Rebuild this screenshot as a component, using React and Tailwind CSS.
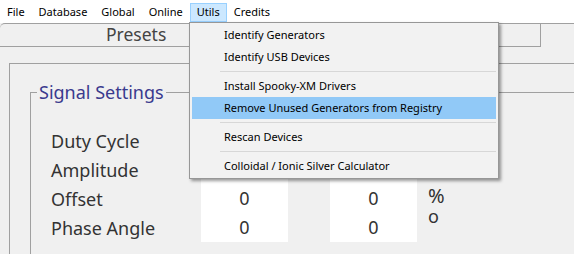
import React from 'react';

const menus = ['File', 'Database', 'Global', 'Online', 'Utils', 'Credits'];

const utilsItems = [
  { label: 'Identify Generators' },
  { label: 'Identify USB Devices' },
  { sep: true },
  { label: 'Install Spooky-XM Drivers' },
  { label: 'Remove Unused Generators from Registry', active: true },
  { sep: true },
  { label: 'Rescan Devices' },
  { sep: true },
  { label: 'Colloidal / Ionic Silver Calculator' },
];

const rows = [
  { label: 'Duty Cycle', a: '', b: '' },
  { label: 'Amplitude', a: '', b: '' },
  { label: 'Offset', a: '0', b: '0', units: true },
  { label: 'Phase Angle', a: '0', b: '0' },
];

export default function App() {
  return (
    <div className="relative w-[574px] h-[254px] overflow-hidden bg-[#f0f0f0] font-['Noto_Sans',sans-serif] text-[#333]">
      {/* menu bar */}
      <div className="flex h-[23px] bg-white text-[11px] text-black">
        {menus.map((m) => (
          <div
            key={m}
            className={
              'mt-[3px] h-[19px] px-[6px] flex items-center border ' +
              (m === 'Utils' ? 'bg-[#cce8ff] border-[#99d1ff]' : 'border-transparent')
            }
          >
            {m}
          </div>
        ))}
      </div>

      {/* tab strip */}
      <div className="flex h-[24px]">
        <div className="w-[541px] border-t border-b border-r border-[#a0a0a0] rounded-tl-[5px] flex items-center pl-[106px] text-[17.5px] text-[#444] leading-none">
          Presets
        </div>
        <div className="flex-1 border-t border-[#a0a0a0]"></div>
      </div>

      {/* page */}
      <div className="pt-[16px] pl-[9px]">
        <div className="border-t border-l border-[#a0a0a0] h-[200px] pl-[20px] pt-[16px]">
          <fieldset className="border-t border-l border-[#a0a0a0] h-[200px]">
            <legend className="ml-[6px] px-[2px] text-[18px] leading-[25px] text-[#3a3a8e]">Signal Settings</legend>
            <div className="pt-[21px] pl-[20px] flex flex-col">
              {rows.map((r) => (
                <div key={r.label} className="flex h-[29px] items-center">
                  <div className="w-[150px] text-[18px] leading-none">{r.label}</div>
                  <div className="w-[87px] h-[29px] bg-white flex items-center justify-center text-[18px]">{r.a}</div>
                  <div className="w-[87px] h-[29px] bg-white ml-[42px] flex items-center justify-center text-[18px]">{r.b}</div>
                  {r.units && (
                    <div className="ml-[11px] self-start mt-[2px] flex flex-col">
                      <span className="text-[20px] leading-[20px]">%</span>
                      <span className="text-[18px] leading-[20px]">o</span>
                    </div>
                  )}
                </div>
              ))}
            </div>
          </fieldset>
        </div>
      </div>

      {/* Utils dropdown */}
      <div className="absolute left-[189px] top-[22px] w-[310px] bg-[#f2f2f2] border border-[#979797] shadow-[2px_2px_3px_rgba(0,0,0,0.4)] py-[1px] px-[2px] text-[11px] text-black">
        {utilsItems.map((it, i) =>
          it.sep ? (
            <div key={i} className="h-[7px] flex items-center pl-[28px]">
              <div className="h-px w-full bg-[#d7d7d7]"></div>
            </div>
          ) : (
            <div
              key={i}
              className={'h-[22px] flex items-center pl-[32px] ' + (it.active ? 'bg-[#91c9f7]' : '')}
            >
              {it.label}
            </div>
          )
        )}
      </div>
    </div>
  );
}
